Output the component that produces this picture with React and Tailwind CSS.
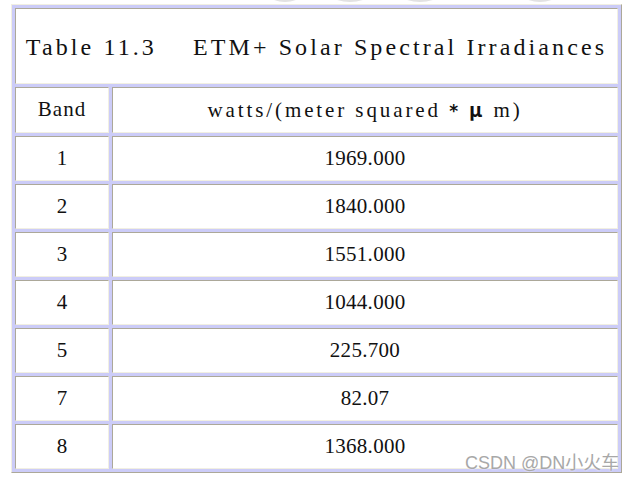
const ROWS = [
  ['1', '1969.000'],
  ['2', '1840.000'],
  ['3', '1551.000'],
  ['4', '1044.000'],
  ['5', '225.700'],
  ['7', '82.07'],
  ['8', '1368.000'],
];

function Cell({ className = '', children }) {
  return (
    <div
      className={`flex items-center justify-center bg-white border border-t-[#aca899] border-l-[#aca899] border-b-[#f1efe2] border-r-[#f1efe2] text-[#111] whitespace-pre ${className}`}
    >
      {children}
    </div>
  );
}

export default function App() {
  const serif = "font-['Liberation_Serif',serif] text-[21px]";
  return (
    <div className="relative w-[638px] h-[484px] bg-white overflow-hidden">
      {/* faint shapes cut off at the top edge */}
      <svg className="absolute left-0 top-0" width="638" height="6">
        <g fill="none" stroke="#e2e2e2" strokeWidth="2">
          <path d="M268 -4 Q285 6 302 -4" />
          <path d="M330 -4 Q350 6 370 -4" />
          <path d="M400 -4 Q420 6 440 -4" />
          <path d="M522 -4 Q540 6 558 -4" />
        </g>
      </svg>
      <div className="pt-[4px] pl-[11px]">
        <div className="w-[611px] border border-t-[#f1efe2] border-l-[#f1efe2] border-b-[#aca899] border-r-[#aca899]">
          <div className="grid grid-cols-[94px_506px] gap-[3px] bg-[#ccccf8] p-[3px]">
            <Cell className="col-span-2 h-[76px] pt-[2px] font-['Liberation_Serif',serif] text-[24px] tracking-[3.1px]">
              <span>
                Table 11.3
                <span className="inline-block w-[36px]" />
                ETM+ Solar Spectral Irradiances
              </span>
            </Cell>
            <Cell className={`h-[46px] ${serif} tracking-[1px]`}>Band</Cell>
            <Cell className="h-[46px] font-['Liberation_Serif',serif] text-[21px] tracking-[2.9px]">
              <span>
                {'watts/(meter squared '}
                <span className="font-['DejaVu_Sans',sans-serif] font-bold text-[17px]">*</span>
                {' '}
                <span className="font-['Noto_Sans_CJK_SC',sans-serif] font-bold text-[20px]">μ</span>
                {' m)'}
              </span>
            </Cell>
            {ROWS.map(([band, val]) => (
              <div key={band} className="contents">
                <Cell className={`h-[45px] ${serif}`}>{band}</Cell>
                <Cell className={`h-[45px] ${serif} tracking-[0.3px]`}>{val}</Cell>
              </div>
            ))}
          </div>
        </div>
      </div>
      <div className="absolute left-[465px] top-[451px] font-['Liberation_Sans','Noto_Sans_CJK_SC',sans-serif] text-[18px] leading-[24px] text-[#a8a8a8] [text-shadow:0_0_2px_#fff]">
        CSDN @DN小火车
      </div>
    </div>
  );
}
